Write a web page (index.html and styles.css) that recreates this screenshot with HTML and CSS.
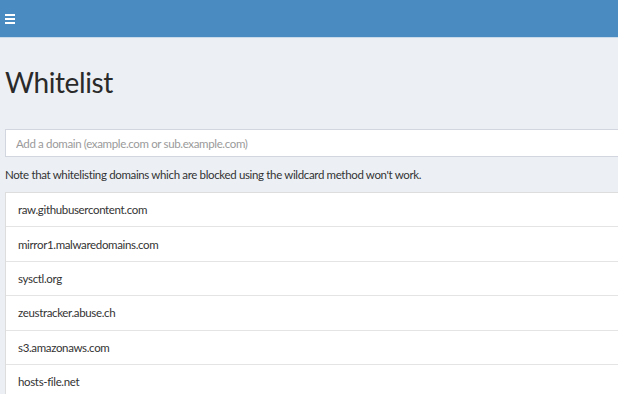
FILE: index.html
```html
<!DOCTYPE html>
<html>
<head>
<meta charset="utf-8">
<link rel="stylesheet" href="styles.css">
</head>
<body>
<header class="navbar">
  <span class="burger"><i></i><i></i><i></i></span>
</header>
<main class="content">
  <h1 class="title">Whitelist</h1>
  <input class="domain-input" type="text" placeholder="Add a domain (example.com or sub.example.com)">
  <p class="note">Note that whitelisting domains which are blocked using the wildcard method won't work.</p>
  <ul class="list">
    <li>raw.githubusercontent.com</li>
    <li>mirror1.malwaredomains.com</li>
    <li>sysctl.org</li>
    <li>zeustracker.abuse.ch</li>
    <li>s3.amazonaws.com</li>
    <li>hosts-file.net</li>
  </ul>
</main>
</body>
</html>
```
FILE: styles.css
```css
html, body {
  margin: 0;
  padding: 0;
  background: #ecf0f5;
  font-family: Lato, "Open Sans", sans-serif;
  color: #333;
  overflow: hidden;
}
.navbar {
  height: 37px;
  background: #4a8cc2;
  border-bottom: 1px solid #c9daea;
  display: flex;
  align-items: center;
  padding-left: 5px;
}
.burger {
  display: flex;
  flex-direction: column;
  gap: 2px;
  width: 10px;
}
.burger i {
  display: block;
  height: 2px;
  background: #fff;
}
.content {
  padding: 0 0 0 5px;
  width: 640px;
}
.title {
  margin: 0;
  padding-top: 26px;
  height: 65px;
  box-sizing: border-box;
  font-weight: 400;
  font-size: 28px;
  letter-spacing: -0.4px;
  line-height: 36px;
  color: #2a2a2a;
}
.domain-input {
  display: block;
  box-sizing: border-box;
  width: 640px;
  height: 28px;
  margin: 26px 0 0;
  padding: 0 10px;
  border: 1px solid #d2d6de;
  background: #fff;
  font-family: inherit;
  font-size: 11.5px;
  letter-spacing: -0.35px;
  color: #555;
  outline: none;
}
.domain-input::placeholder {
  color: #9a9a9a;
}
.note {
  margin: 0;
  height: 35px;
  display: flex;
  align-items: center;
  font-size: 11.5px;
  letter-spacing: -0.35px;
  color: #333;
}
.list {
  list-style: none;
  margin: 0;
  padding: 0;
  background: #fff;
  border: 1px solid #ddd;
  border-right: none;
}
.list li {
  height: 34.4px;
  box-sizing: border-box;
  display: flex;
  align-items: center;
  padding-left: 12px;
  font-size: 11.5px;
  letter-spacing: -0.35px;
  color: #333;
  border-bottom: 1px solid #e4e4e4;
}
```
